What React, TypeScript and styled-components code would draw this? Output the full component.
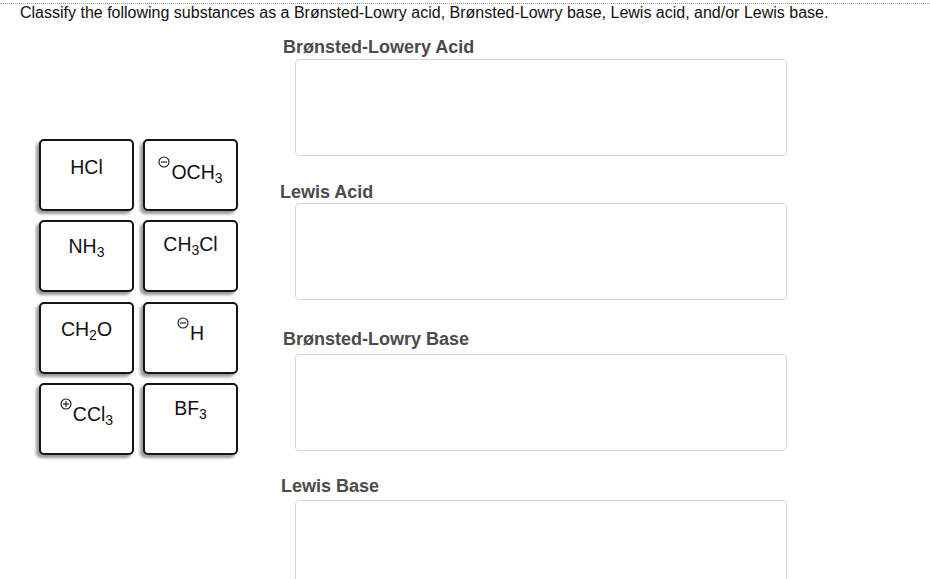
import React from "react";
import styled, { createGlobalStyle } from "styled-components";

const Global = createGlobalStyle`
  html, body { margin: 0; padding: 0; background: #fff; }
  body { font-family: "Liberation Sans", Arial, Helvetica, sans-serif; color: #111; }
`;

const Page = styled.div`
  width: 930px;
  height: 579px;
  overflow: hidden;
  padding-top: 3px;
  box-sizing: border-box;
`;

const Instruction = styled.div`
  border-top: 1px dotted #9a9a9a;
  padding: 0 0 0 20px;
  font-size: 16px;
  line-height: 18px;
  height: 18px;
  color: #111;
`;

const Main = styled.div`
  display: flex;
  align-items: flex-start;
`;

const TileGrid = styled.div`
  display: grid;
  grid-template-columns: 95px 95px;
  grid-auto-rows: 72px;
  column-gap: 9px;
  row-gap: 9.3px;
  margin: 117px 0 0 39px;
`;

const Tile = styled.div<{ $baseline: number }>`
  box-sizing: border-box;
  border: 2px solid #151515;
  border-radius: 5px;
  background: #fff;
  box-shadow: -3px 3px 3px rgba(0, 0, 0, 0.4);
  padding-top: ${(p) => p.$baseline - 19}px;
  text-align: center;
  font-size: 19.5px;
  line-height: 21px;
  color: #111;
`;

const Sub = styled.span`
  font-size: 14px;
  line-height: 14px;
  vertical-align: -4px;
`;

const Charge = styled.svg`
  width: 12px;
  height: 12px;
  position: relative;
  top: -11px;
  margin-right: 1px;
`;

const Answers = styled.div`
  margin-left: 42px;
  display: flex;
  flex-direction: column;
`;

const Section = styled.div<{ $mt: number }>`
  margin-top: ${(p) => p.$mt}px;
  display: flex;
  flex-direction: column;
`;

const Label = styled.div<{ $indent: number; $gap: number }>`
  padding-left: ${(p) => p.$indent}px;
  margin-bottom: ${(p) => p.$gap}px;
  font-size: 18px;
  font-weight: bold;
  line-height: 20px;
  color: #4b4b4b;
`;

const DropBox = styled.div`
  margin-left: 15px;
  width: 492px;
  height: 97px;
  box-sizing: border-box;
  border: 1px solid #d8d8d8;
  border-radius: 4px;
  background: #fff;
`;

const ChargeIcon = ({ sign }: { sign: "+" | "-" }) => (
  <Charge viewBox="0 0 12 12">
    <circle cx="6" cy="6" r="5" fill="none" stroke="#111" strokeWidth="1.1" />
    <line x1="3" y1="6" x2="9" y2="6" stroke="#111" strokeWidth="1.1" />
    {sign === "+" && <line x1="6" y1="3" x2="6" y2="9" stroke="#111" strokeWidth="1.1" />}
  </Charge>
);

type TileData = { key: string; baseline: number; content: React.ReactNode };

const tiles: TileData[] = [
  { key: "hcl", baseline: 35, content: <>HCl</> },
  {
    key: "och3",
    baseline: 40,
    content: (
      <>
        <ChargeIcon sign="-" />
        OCH<Sub>3</Sub>
      </>
    ),
  },
  { key: "nh3", baseline: 33, content: <>NH<Sub>3</Sub></> },
  { key: "ch3cl", baseline: 31, content: <>CH<Sub>3</Sub>Cl</> },
  { key: "ch2o", baseline: 34, content: <>CH<Sub>2</Sub>O</> },
  {
    key: "h",
    baseline: 38,
    content: (
      <>
        <ChargeIcon sign="-" />H
      </>
    ),
  },
  {
    key: "ccl3",
    baseline: 38,
    content: (
      <>
        <ChargeIcon sign="+" />
        CCl<Sub>3</Sub>
      </>
    ),
  },
  { key: "bf3", baseline: 32, content: <>BF<Sub>3</Sub></> },
];

const sections = [
  { title: "Brønsted-Lowery Acid", mt: 15, indent: 3, gap: 2 },
  { title: "Lewis Acid", mt: 26, indent: 0, gap: 1 },
  { title: "Brønsted-Lowry Base", mt: 29, indent: 3, gap: 5 },
  { title: "Lewis Base", mt: 25, indent: 1, gap: 4 },
];

export default function App() {
  return (
    <Page>
      <Global />
      <Instruction>
        Classify the following substances as a Brønsted-Lowry acid, Brønsted-Lowry base, Lewis acid, and/or Lewis base.
      </Instruction>
      <Main>
        <TileGrid>
          {tiles.map((t) => (
            <Tile key={t.key} $baseline={t.baseline}>
              {t.content}
            </Tile>
          ))}
        </TileGrid>
        <Answers>
          {sections.map((s) => (
            <Section key={s.title} $mt={s.mt}>
              <Label $indent={s.indent} $gap={s.gap}>
                {s.title}
              </Label>
              <DropBox />
            </Section>
          ))}
        </Answers>
      </Main>
    </Page>
  );
}
